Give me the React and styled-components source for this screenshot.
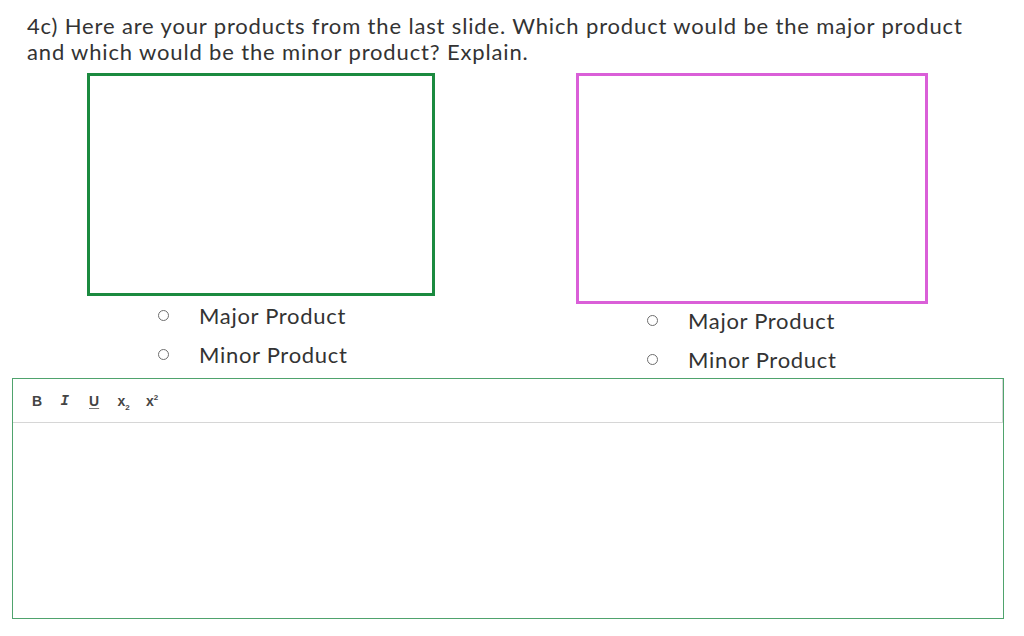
import React from "react";
import styled, { createGlobalStyle } from "styled-components";

const Global = createGlobalStyle`
  html, body { margin: 0; padding: 0; background: #fff; }
  body { font-family: Lato, "Open Sans", sans-serif; color: #333; }
`;

const Page = styled.div`
  width: 1024px;
  height: 636px;
  padding: 13px 20px 0 12px;
  box-sizing: border-box;
  display: flex;
  flex-direction: column;
`;

const Title = styled.p`
  margin: 0 0 8px 15px;
  font-size: 22px;
  line-height: 26px;
  letter-spacing: 0.85px;
  color: #333;
`;

const Columns = styled.div`
  display: grid;
  grid-template-columns: 1fr 1fr;
  margin-bottom: -1px;
`;

const Column = styled.div`
  display: flex;
  flex-direction: column;
  align-items: center;
  padding-left: ${(p) => p.$left || 0}px;
  padding-right: ${(p) => p.$right || 0}px;
`;

const Inner = styled.div`
  display: flex;
  flex-direction: column;
  align-items: flex-start;
`;

const ImageBox = styled.div`
  width: ${(p) => p.$w}px;
  height: ${(p) => p.$h}px;
  box-sizing: border-box;
  border: 3px solid ${(p) => p.$color};
  background: #fff;
`;

const RadioGroup = styled.div`
  display: flex;
  flex-direction: column;
  margin-left: 71px;
  margin-top: ${(p) => p.$top}px;
`;

const RadioRow = styled.label`
  display: flex;
  align-items: center;
  height: 39px;
  font-size: 22px;
  letter-spacing: 0.7px;
  color: #333;
`;

const Circle = styled.span`
  width: 11px;
  height: 11px;
  box-sizing: border-box;
  border: 1.8px solid #6e6e6e;
  border-radius: 50%;
  margin-right: 30px;
  flex: none;
`;

const Editor = styled.div`
  height: 241px;
  box-sizing: border-box;
  border: 1px solid #4fa36d;
  display: flex;
  flex-direction: column;
`;

const Toolbar = styled.div`
  height: 44px;
  box-sizing: border-box;
  border: 1px solid #d6d6d6;
  border-left: none;
  border-top: none;
  display: flex;
  align-items: center;
  padding-left: 19px;
`;

const Tool = styled.span`
  width: 28.5px;
  font-family: ${(p) => (p.$serif ? '"Liberation Mono", monospace' : '"Liberation Sans", Arial, sans-serif')};
  font-weight: bold;
  font-style: ${(p) => (p.$italic ? "italic" : "normal")};
  text-decoration: ${(p) => (p.$under ? "underline" : "none")};
  text-decoration-color: #777;
  text-underline-offset: 2px;
  font-size: 14px;
  color: #444;
  line-height: 16px;
  sub, sup { font-size: 8px; line-height: 0; }
`;

const Body = styled.div`
  flex: 1;
`;

function Radios({ top }) {
  return (
    <RadioGroup $top={top}>
      <RadioRow>
        <Circle />
        Major Product
      </RadioRow>
      <RadioRow>
        <Circle />
        Minor Product
      </RadioRow>
    </RadioGroup>
  );
}

export default function App() {
  return (
    <>
      <Global />
      <Page>
        <Title>
          4c) Here are your products from the last slide. Which product would be the major product
          <br />
          and which would be the minor product? Explain.
        </Title>
        <Columns>
          <Column $left={2}>
            <Inner>
              <ImageBox $w={348} $h={223} $color="#1b8a3f" />
              <Radios top={0} />
            </Inner>
          </Column>
          <Column $right={8}>
            <Inner>
              <ImageBox $w={352} $h={231} $color="#da5fd8" />
              <Radios top={-3} />
            </Inner>
          </Column>
        </Columns>
        <Editor>
          <Toolbar>
            <Tool>B</Tool>
            <Tool $serif $italic>I</Tool>
            <Tool $under>U</Tool>
            <Tool>x<sub>2</sub></Tool>
            <Tool>x<sup>2</sup></Tool>
          </Toolbar>
          <Body />
        </Editor>
      </Page>
    </>
  );
}
